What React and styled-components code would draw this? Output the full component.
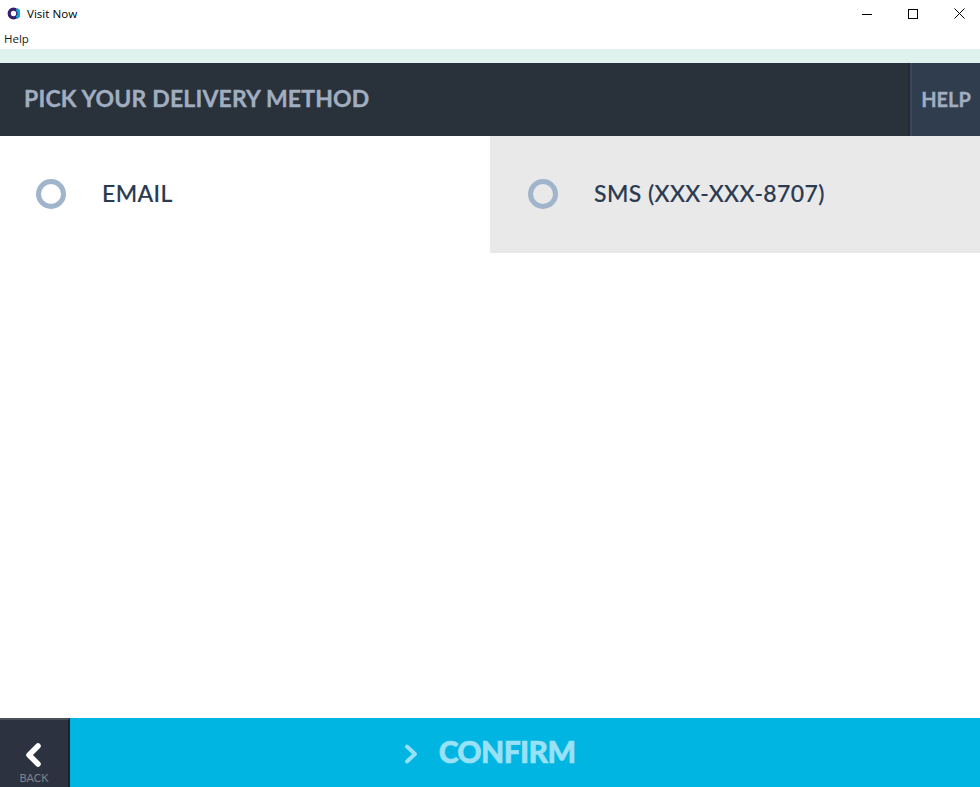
import styled, { createGlobalStyle } from "styled-components";

const GlobalStyle = createGlobalStyle`
  html, body {
    margin: 0;
    padding: 0;
    height: 100%;
    background: #ffffff;
  }
  #root {
    height: 100%;
  }
`;

const Page = styled.div`
  height: 787px;
  width: 980px;
  overflow: hidden;
  display: flex;
  flex-direction: column;
  background: #ffffff;
  font-family: Lato, "Noto Sans", sans-serif;
`;

const TitleBar = styled.div`
  height: 27px;
  display: flex;
  align-items: center;
  justify-content: space-between;
  padding-left: 7px;
`;

const AppName = styled.div`
  display: flex;
  align-items: center;
  gap: 7px;
  font-family: "Open Sans", "Noto Sans", sans-serif;
  font-size: 11.6px;
  color: #000000;
`;

const WindowButtons = styled.div`
  display: flex;
  margin-right: -2px;
`;

const WindowButton = styled.div`
  width: 46px;
  height: 27px;
  display: flex;
  align-items: center;
  justify-content: center;
`;

const MenuBar = styled.div`
  height: 22px;
  display: flex;
  align-items: center;
  padding-left: 4px;
  font-family: "Open Sans", "Noto Sans", sans-serif;
  font-size: 11.5px;
  color: #1a1a1a;
`;

const Strip = styled.div`
  height: 14px;
  background: #dff2ed;
`;

const Header = styled.header`
  height: 73px;
  display: flex;
  background: #29313b;
`;

const Title = styled.h1`
  flex: 1;
  margin: 0;
  padding: 0 0 3px 24px;
  display: flex;
  align-items: center;
  font-size: 23px;
  font-weight: 700;
  letter-spacing: 0.16px;
  -webkit-text-stroke: 0.35px #a0aec0;
  color: #a0aec0;
`;

const HelpButton = styled.div`
  width: 70px;
  display: flex;
  align-items: center;
  justify-content: center;
  padding-bottom: 2px;
  box-sizing: border-box;
  background: #2f3d4e;
  border-left: 2px solid #3a4859;
  box-shadow: -2px 0 0 #232a34;
  font-size: 20px;
  font-weight: 700;
  -webkit-text-stroke: 0.3px #a0aec0;
  color: #a0aec0;
`;

const Options = styled.div`
  height: 117px;
  display: grid;
  grid-template-columns: 490px 490px;
`;

const Option = styled.div`
  display: flex;
  align-items: center;
  padding-left: ${(props) => props.$inset}px;
  background: ${(props) => (props.$selected ? "#e9e9e9" : "#ffffff")};
`;

const Radio = styled.span`
  width: 30px;
  height: 30px;
  box-sizing: border-box;
  border: 5px solid #a0b4cb;
  border-radius: 50%;
  margin: 0 36px 1px 0;
`;

const OptionLabel = styled.span`
  margin-bottom: 4px;
  font-size: 23px;
  font-weight: 500;
  letter-spacing: 0.4px;
  -webkit-text-stroke: 0.15px #2a3a50;
  color: #2a3a50;
`;

const Spacer = styled.div`
  flex: 1;
`;

const Footer = styled.footer`
  height: 69px;
  display: flex;
`;

const BackButton = styled.div`
  width: 70px;
  box-sizing: border-box;
  display: flex;
  flex-direction: column;
  align-items: center;
  padding: 23px 2px 0 0;
  background: #2d3240;
  border-top: 2px solid #4b4f5a;
  border-right: 2px solid #1c202a;
`;

const BackLabel = styled.span`
  margin: 4px 0 0 2px;
  font-size: 11px;
  line-height: 14px;
  color: #7f828b;
`;

const ConfirmButton = styled.div`
  flex: 1;
  display: flex;
  align-items: center;
  justify-content: center;
  gap: 21px;
  padding: 0 71px 3px 0;
  background: #00b5e2;
  font-size: 30px;
  font-weight: 900;
  letter-spacing: -0.6px;
  -webkit-text-stroke: 0.6px #99e1f6;
  color: #99e1f6;
`;

const ConfirmIcon = styled.svg`
  margin-top: 5px;
`;

const Logo = () => (
  <svg width="13" height="13" viewBox="0 0 13 13">
    <circle cx="6.5" cy="6.5" r="4.3" fill="none" stroke="#37206e" strokeWidth="3.2" />
    <path d="M9.5 2.5a4.3 4.3 0 0 1 0 8" fill="none" stroke="#10a9d6" strokeWidth="3.2" />
  </svg>
);

const App = () => {
  return (
    <Page>
      <GlobalStyle />
      <TitleBar>
        <AppName>
          <Logo />
          Visit Now
        </AppName>
        <WindowButtons>
          <WindowButton>
            <svg width="10" height="10" viewBox="0 0 10 10">
              <path d="M0 5.5h10" stroke="#000" strokeWidth="1" />
            </svg>
          </WindowButton>
          <WindowButton>
            <svg width="10" height="10" viewBox="0 0 10 10">
              <rect x="0.5" y="0.5" width="9" height="9" fill="none" stroke="#000" />
            </svg>
          </WindowButton>
          <WindowButton>
            <svg width="11" height="11" viewBox="0 0 11 11">
              <path d="M0.5 0.5l10 10M10.5 0.5l-10 10" stroke="#000" strokeWidth="1" />
            </svg>
          </WindowButton>
        </WindowButtons>
      </TitleBar>
      <MenuBar>Help</MenuBar>
      <Strip />
      <Header>
        <Title>PICK YOUR DELIVERY METHOD</Title>
        <HelpButton>HELP</HelpButton>
      </Header>
      <Options>
        <Option $inset={36}>
          <Radio />
          <OptionLabel>EMAIL</OptionLabel>
        </Option>
        <Option $inset={38} $selected>
          <Radio />
          <OptionLabel>SMS (XXX-XXX-8707)</OptionLabel>
        </Option>
      </Options>
      <Spacer />
      <Footer>
        <BackButton>
          <svg width="18" height="24" viewBox="0 0 18 24">
            <path d="M14 3L5 12l9 9" fill="none" stroke="#ffffff" strokeWidth="5.5" strokeLinecap="round" strokeLinejoin="round" />
          </svg>
          <BackLabel>BACK</BackLabel>
        </BackButton>
        <ConfirmButton>
          <ConfirmIcon width="14" height="20" viewBox="0 0 14 20">
            <path d="M3 2.5l8 7.5-8 7.5" fill="none" stroke="#99e1f6" strokeWidth="3.8" strokeLinecap="round" strokeLinejoin="round" />
          </ConfirmIcon>
          CONFIRM
        </ConfirmButton>
      </Footer>
    </Page>
  );
};

export default App;
